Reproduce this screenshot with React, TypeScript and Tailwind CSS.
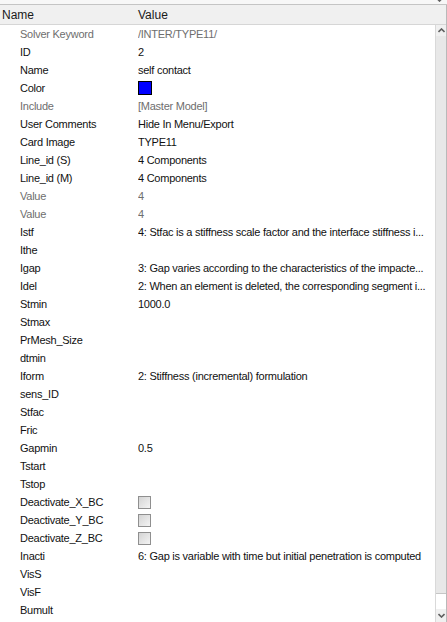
import React from 'react';

type Row = {
  name: string;
  value?: string;
  dim?: boolean;
  kind?: 'color' | 'check';
};

const rows: Row[] = [
  { name: 'Solver Keyword', value: '/INTER/TYPE11/', dim: true },
  { name: 'ID', value: '2' },
  { name: 'Name', value: 'self contact' },
  { name: 'Color', kind: 'color' },
  { name: 'Include', value: '[Master Model]', dim: true },
  { name: 'User Comments', value: 'Hide In Menu/Export' },
  { name: 'Card Image', value: 'TYPE11' },
  { name: 'Line_id (S)', value: '4 Components' },
  { name: 'Line_id (M)', value: '4 Components' },
  { name: 'Value', value: '4', dim: true },
  { name: 'Value', value: '4', dim: true },
  { name: 'Istf', value: '4: Stfac is a stiffness scale factor and the interface stiffness i...' },
  { name: 'Ithe' },
  { name: 'Igap', value: '3: Gap varies according to the characteristics of the impacte...' },
  { name: 'Idel', value: '2: When an element is deleted, the corresponding segment i...' },
  { name: 'Stmin', value: '1000.0' },
  { name: 'Stmax' },
  { name: 'PrMesh_Size' },
  { name: 'dtmin' },
  { name: 'Iform', value: '2: Stiffness (incremental) formulation' },
  { name: 'sens_ID' },
  { name: 'Stfac' },
  { name: 'Fric' },
  { name: 'Gapmin', value: '0.5' },
  { name: 'Tstart' },
  { name: 'Tstop' },
  { name: 'Deactivate_X_BC', kind: 'check' },
  { name: 'Deactivate_Y_BC', kind: 'check' },
  { name: 'Deactivate_Z_BC', kind: 'check' },
  { name: 'Inacti', value: '6: Gap is variable with time but initial penetration is computed' },
  { name: 'VisS' },
  { name: 'VisF' },
  { name: 'Bumult' },
];

const Chevron = ({ up }: { up?: boolean }) => (
  <svg width="7" height="5" viewBox="0 0 7 5">
    <polyline
      points={up ? '0.5,4 3.5,1 6.5,4' : '0.5,1 3.5,4 6.5,1'}
      fill="none"
      stroke="#606060"
      strokeWidth="1.6"
    />
  </svg>
);

export default function App() {
  return (
    <div
      className="w-[447px] h-[622px] bg-white overflow-hidden flex flex-col text-[11px] text-black"
      style={{ fontFamily: '"Liberation Sans", Arial, sans-serif' }}
    >
      {/* top strip */}
      <div className="h-[5px] shrink-0 bg-[#f7f7f7] border-b border-[#c4c4c4] flex justify-end pr-[4px] items-start overflow-hidden">
        <div className="-mt-[3px]">
          <Chevron />
        </div>
      </div>

      <div className="flex-1 flex flex-col border-r border-[#b9b9b9] min-h-0">
        {/* header */}
        <div className="h-[20px] shrink-0 bg-[#f0f0f0] border-b border-[#d6d6d6] flex items-center text-[12px] text-[#1a1a1a]">
          <div className="w-[138px] pl-[2px]">Name</div>
          <div>Value</div>
        </div>

        <div className="flex-1 flex min-h-0">
          {/* rows */}
          <div className="flex-1 min-w-0 tracking-[-0.25px]">
            {rows.map((r, i) => (
              <div key={i} className="h-[18px] flex items-center">
                <div className={`w-[138px] shrink-0 pl-[20px] ${r.dim ? 'text-[#6e6e6e]' : 'text-[#111]'}`}>
                  {r.name}
                </div>
                <div className={`flex-1 min-w-0 whitespace-nowrap overflow-hidden ${r.dim ? 'text-[#6e6e6e]' : 'text-[#111]'}`}>
                  {r.kind === 'color' && (
                    <div className="w-[14px] h-[14px] bg-[#0000ff] border border-black" />
                  )}
                  {r.kind === 'check' && (
                    <div className="w-[13px] h-[13px] border border-[#8f8f8f] bg-gradient-to-br from-[#d4d4d4] to-[#f4f4f4]" />
                  )}
                  {r.value}
                </div>
              </div>
            ))}
          </div>

          {/* scrollbar */}
          <div className="w-[11px] shrink-0 border-l border-[#d9d9d9] flex flex-col bg-white">
            <div className="h-[11px] shrink-0 flex items-center justify-center bg-[#f0f0f0]">
              <Chevron up />
            </div>
            <div className="h-[558px] shrink-0 bg-[#e8e8e8] border-b border-[#c6c6c6]" />
            <div className="flex-1" />
            <div className="h-[13px] shrink-0 flex items-center justify-center bg-[#f0f0f0]">
              <Chevron />
            </div>
          </div>
        </div>
      </div>
    </div>
  );
}
